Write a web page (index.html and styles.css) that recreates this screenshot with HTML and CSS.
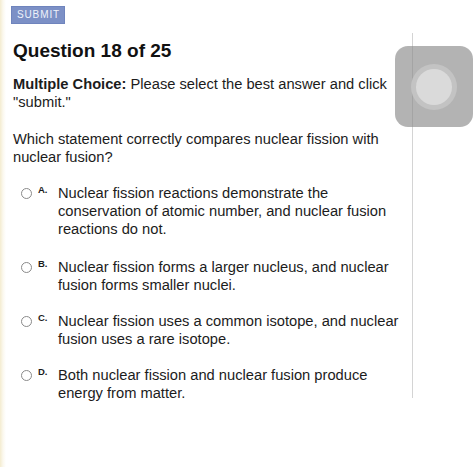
FILE: index.html
```html
<!DOCTYPE html>
<html>
<head>
    <meta charset="UTF-8">
    <title>Question 18 of 25</title>
    <link rel="stylesheet" href="styles.css">
</head>
<body>

    <div class="page">
        <div class="toolbar">
            <button class="submit">SUBMIT</button>
        </div>

        <div class="panel">
            <h1 class="title">Question 18 of 25</h1>
            <p class="instructions"><b>Multiple Choice:</b> Please select the best answer and click "submit."</p>
            <p class="prompt">Which statement correctly compares nuclear fission with nuclear fusion?</p>

            <div class="choices">
                <label class="choice">
                    <span class="radio"></span>
                    <span class="letter">A.</span>
                    <span class="answer">Nuclear fission reactions demonstrate the conservation of atomic number, and nuclear fusion reactions do not.</span>
                </label>
                <label class="choice">
                    <span class="radio"></span>
                    <span class="letter">B.</span>
                    <span class="answer">Nuclear fission forms a larger nucleus, and nuclear fusion forms smaller nuclei.</span>
                </label>
                <label class="choice">
                    <span class="radio"></span>
                    <span class="letter">C.</span>
                    <span class="answer">Nuclear fission uses a common isotope, and nuclear fusion uses a rare isotope.</span>
                </label>
                <label class="choice">
                    <span class="radio"></span>
                    <span class="letter">D.</span>
                    <span class="answer">Both nuclear fission and nuclear fusion produce energy from matter.</span>
                </label>
            </div>
        </div>
    </div>

    <div class="touch-button">
        <div class="touch-ring">
            <div class="touch-dot"></div>
        </div>
    </div>

</body>
</html>
```

FILE: styles.css
```css
body {
    margin: 0;
    padding: 0;
    font-family: "Liberation Sans", Arial, sans-serif;
    color: #1c1c1c;
    background: linear-gradient(to right, #f4ecd0 0px, #fbf8ee 3px, #ffffff 6px);
}

.page {
    min-height: 467px;
    box-sizing: border-box;
    padding-left: 4px;
}

.toolbar {
    padding: 6px 0 0 7px;
    height: 27px;
    box-sizing: border-box;
}

.submit {
    display: block;
    font-family: "Liberation Sans", Arial, sans-serif;
    font-size: 10px;
    letter-spacing: 0.9px;
    color: #eef1fa;
    background-color: #7c90c6;
    border: 1px solid #6f84bd;
    padding: 0 0 0 1px;
    width: 54px;
    height: 18px;
    line-height: 16px;
    cursor: pointer;
}

.panel {
    width: 409px;
    box-sizing: border-box;
    padding: 6px 8px 0 9px;
    height: 365px;
    border-right: 1px solid #d4d4d4;
    margin-top: 6px;
}

.title {
    font-size: 19px;
    font-weight: bold;
    margin: 0;
    line-height: 24px;
    color: #111;
}

.instructions {
    font-size: 14.7px;
    line-height: 18px;
    margin: 12px 0 0 0;
}

.prompt {
    font-size: 14.7px;
    line-height: 18px;
    margin: 19px 0 0 0;
}

.choices {
    margin-top: 18px;
}

.choice {
    display: flex;
    align-items: flex-start;
    padding-left: 8px;
    margin-bottom: 18px;
    cursor: pointer;
}

.choice:first-child {
    margin-bottom: 20px;
}

.radio {
    flex: none;
    width: 9px;
    height: 9px;
    border: 1px solid #8a8a8a;
    border-radius: 50%;
    margin-top: 4px;
}

.letter {
    flex: none;
    width: 20px;
    font-size: 9.5px;
    font-weight: bold;
    margin-left: 6px;
    line-height: 12px;
}

.answer {
    font-size: 14.7px;
    line-height: 18px;
}

.touch-button {
    position: absolute;
    left: 395px;
    top: 46px;
    width: 78px;
    height: 81px;
    border-radius: 13px;
    background-color: rgba(140, 140, 140, 0.66);
    display: flex;
    align-items: center;
    justify-content: center;
}

.touch-ring {
    width: 46px;
    height: 46px;
    border-radius: 50%;
    background-color: #c3c3c3;
    display: flex;
    align-items: center;
    justify-content: center;
}

.touch-dot {
    width: 36px;
    height: 36px;
    border-radius: 50%;
    background-color: #dadada;
}
```
